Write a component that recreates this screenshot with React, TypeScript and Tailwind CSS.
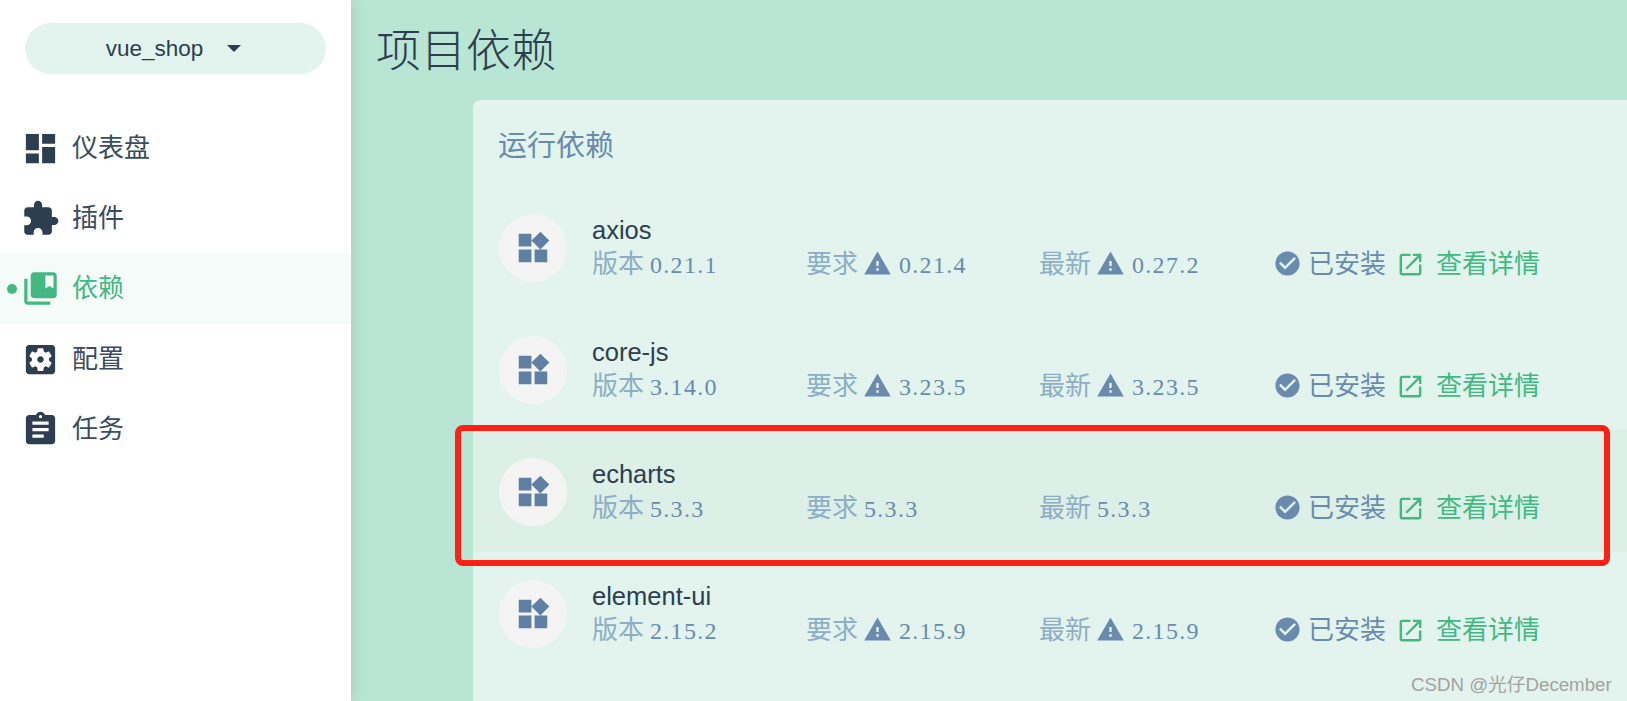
const CJK = 'font-["Liberation_Sans","Noto_Sans_CJK_SC",sans-serif]';

const ICONS = {
  dashboard: 'M3 13h8V3H3v10zm0 8h8v-6H3v6zm10 0h8V11h-8v10zm0-18v6h8V3h-8z',
  extension:
    'M20.5 11H19V7c0-1.1-.9-2-2-2h-4V3.5C13 2.12 11.88 1 10.5 1S8 2.12 8 3.5V5H4c-1.1 0-1.99.9-1.99 2v3.8H3.5c1.49 0 2.7 1.21 2.7 2.7s-1.21 2.7-2.7 2.7H2V20c0 1.1.9 2 2 2h3.8v-1.5c0-1.49 1.21-2.7 2.7-2.7 1.49 0 2.7 1.21 2.7 2.7V22H17c1.1 0 2-.9 2-2v-4h1.5c1.38 0 2.5-1.12 2.5-2.5S21.88 11 20.5 11z',
  bookmark:
    'M4 6H2v14c0 1.1.9 2 2 2h14v-2H4V6zM20 2H8c-1.1 0-2 .9-2 2v12c0 1.1.9 2 2 2h12c1.1 0 2-.9 2-2V4c0-1.1-.9-2-2-2zm0 10l-2.5-1.5L15 12V4h5v8z',
  settings:
    'M12 10c-1.1 0-2 .9-2 2s.9 2 2 2 2-.9 2-2-.9-2-2-2zm7-7H5c-1.11 0-2 .9-2 2v14c0 1.1.89 2 2 2h14c1.11 0 2-.9 2-2V5c0-1.1-.89-2-2-2zm-1.75 9c0 .23-.02.46-.05.68l1.48 1.16c.13.11.17.3.08.45l-1.4 2.42c-.09.15-.27.21-.43.15l-1.74-.7c-.36.28-.76.51-1.18.69l-.26 1.85c-.03.17-.18.3-.35.3h-2.8c-.17 0-.32-.13-.35-.29l-.26-1.85c-.43-.18-.82-.41-1.18-.69l-1.74.7c-.16.06-.34 0-.43-.15l-1.4-2.42c-.09-.15-.05-.34.08-.45l1.48-1.16c-.03-.23-.05-.46-.05-.69 0-.23.02-.46.05-.68l-1.48-1.16c-.13-.11-.17-.3-.08-.45l1.4-2.42c.09-.15.27-.21.43-.15l1.74.7c.36-.28.76-.51 1.18-.69l.26-1.85c.03-.17.18-.3.35-.3h2.8c.17 0 .32.13.35.29l.26 1.85c.43.18.82.41 1.18.69l1.74-.7c.16-.06.34 0 .43.15l1.4 2.42c.09.15.05.34-.08.45l-1.48 1.16c.03.23.05.46.05.69z',
  assignment:
    'M19 3h-4.18C14.4 1.84 13.3 1 12 1c-1.3 0-2.4.84-2.82 2H5c-1.1 0-2 .9-2 2v14c0 1.1.9 2 2 2h14c1.1 0 2-.9 2-2V5c0-1.1-.9-2-2-2zm-7 0c.55 0 1 .45 1 1s-.45 1-1 1-1-.45-1-1 .45-1 1-1zm2 14H7v-2h7v2zm3-4H7v-2h10v2zm0-4H7V7h10v2z',
  widgets: 'M13 13v8h8v-8h-8zM3 21h8v-8H3v8zM3 3v8h8V3H3zm13.66-1.31L11 7.34 16.66 13l5.66-5.66-5.66-5.65z',
  warning: 'M1 21h22L12 2 1 21zm12-3h-2v-2h2v2zm0-4h-2v-4h2v4z',
  check: 'M12 2C6.48 2 2 6.48 2 12s4.48 10 10 10 10-4.48 10-10S17.52 2 12 2zm-2 15l-5-5 1.41-1.41L10 14.17l7.59-7.59L19 8l-9 9z',
  open: 'M19 19H5V5h7V3H5c-1.11 0-2 .9-2 2v14c0 1.1.89 2 2 2h14c1.1 0 2-.9 2-2v-7h-2v7zM14 3v2h3.59l-9.83 9.83 1.41 1.41L19 6.41V10h2V3h-7z',
};

function Icon({ name, className }: { name: keyof typeof ICONS; className: string }) {
  return (
    <svg viewBox="0 0 24 24" fill="currentColor" className={className}>
      <path d={ICONS[name]} />
    </svg>
  );
}

const NAV: { icon: keyof typeof ICONS; label: string; active?: boolean }[] = [
  { icon: 'dashboard', label: '仪表盘' },
  { icon: 'extension', label: '插件' },
  { icon: 'bookmark', label: '依赖', active: true },
  { icon: 'settings', label: '配置' },
  { icon: 'assignment', label: '任务' },
];

const DEPS = [
  { name: 'axios', current: '0.21.1', wanted: '0.21.4', latest: '0.27.2', warn: true },
  { name: 'core-js', current: '3.14.0', wanted: '3.23.5', latest: '3.23.5', warn: true },
  { name: 'echarts', current: '5.3.3', wanted: '5.3.3', latest: '5.3.3', warn: false, hover: true },
  { name: 'element-ui', current: '2.15.2', wanted: '2.15.9', latest: '2.15.9', warn: true },
];

function Version({ value, warn }: { value: string; warn?: boolean }) {
  return (
    <span
      className={`font-["Liberation_Serif",serif] text-[24px] tracking-[1.3px] text-[#6a8bad] ${
        warn ? 'ml-[7px]' : 'ml-[6px]'
      }`}
    >
      {value}
    </span>
  );
}

function Sidebar() {
  return (
    <aside className="relative z-10 w-[351px] shrink-0 bg-white shadow-[0_0_16px_rgba(0,0,0,0.12)]">
      <div className="mx-[25px] mt-[23px] h-[51px] rounded-full bg-[#e2f4ed] flex items-center justify-center text-[22.5px] text-[#2c3e50] pr-[4px]">
        <span>vue_shop</span>
        <span className="ml-[24px] w-0 h-0 border-x-[7px] border-x-transparent border-t-[7px] border-t-[#2c3e50]" />
      </div>
      <nav className="mt-[39px]">
        {NAV.map((item) => (
          <div
            key={item.label}
            className={`relative h-[70.4px] flex items-center pl-[21px] ${
              item.active ? 'bg-[#f5fbf9] text-[#42b983]' : 'text-[#2c3e50]'
            }`}
          >
            {item.active && <span className="absolute left-[7px] w-[10px] h-[10px] rounded-full bg-[#42b983]" />}
            <Icon name={item.icon} className="w-[39px] h-[39px]" />
            <span className={`ml-[12px] text-[26px] ${item.active ? 'text-[#42b983]' : 'text-[#3a4c5e]'}`}>
              {item.label}
            </span>
          </div>
        ))}
      </nav>
    </aside>
  );
}

function DepRow({ dep }: { dep: (typeof DEPS)[number] }) {
  return (
    <div className={`h-[122px] flex items-center pl-[26px] ${dep.hover ? 'bg-[#dcf0e8]' : ''}`}>
      <div className="mt-[2px] w-[68px] h-[68px] rounded-full bg-[#f4f4f4] flex items-center justify-center shrink-0">
        <Icon name="widgets" className="w-[38px] h-[38px] text-[#5f7fa3]" />
      </div>
      <div className="ml-[25px] pt-[2px]">
        <div className="text-[25.5px] leading-[33px] text-[#2c3e50]">{dep.name}</div>
        <div className="flex items-center h-[36px] text-[26px] text-[#8fadc4]">
          <div className="w-[214px] flex items-center">
            版本
            <Version value={dep.current} />
          </div>
          <div className="w-[233px] flex items-center">
            要求
            {dep.warn && <Icon name="warning" className="ml-[5px] mb-[3px] w-[29px] h-[29px] text-[#6a8bad]" />}
            <Version value={dep.wanted} warn={dep.warn} />
          </div>
          <div className="w-[234px] flex items-center">
            最新
            {dep.warn && <Icon name="warning" className="ml-[5px] mb-[3px] w-[29px] h-[29px] text-[#6a8bad]" />}
            <Version value={dep.latest} warn={dep.warn} />
          </div>
          <div className="flex items-center text-[#6a8bad]">
            <Icon name="check" className="mb-[3px] w-[29px] h-[29px]" />
            <span className="ml-[6px]">已安装</span>
            <Icon name="open" className="ml-[10px] mb-[1px] w-[29px] h-[29px] text-[#42b983]" />
            <span className="ml-[11px] text-[#42b983]">查看详情</span>
          </div>
        </div>
      </div>
    </div>
  );
}

export default function App() {
  return (
    <div className={`relative flex h-[701px] w-full overflow-hidden bg-[#b9e5d5] ${CJK}`}>
      <Sidebar />
      <main className="flex-1 flex flex-col min-w-0">
        <h1 className="h-[100px] shrink-0 pl-[25px] pt-[4px] flex items-center text-[45px] font-light text-[#2c3e50]">
          项目依赖
        </h1>
        <section className="flex-1 ml-[122px] rounded-tl-[8px] bg-[#e2f4ed]">
          <h2 className="h-[86px] pl-[25px] pt-[8px] flex items-center text-[29px] font-normal text-[#6a8bad]">
            运行依赖
          </h2>
          {DEPS.map((dep) => (
            <DepRow key={dep.name} dep={dep} />
          ))}
        </section>
      </main>
      <div className="absolute z-20 left-[455px] top-[425px] w-[1155px] h-[141px] rounded-[8px] border-[6px] border-[#ff2015]" />
      <div className="absolute z-20 left-[1411px] top-[671px] text-[18.7px] text-[#a3a3a3]">CSDN @光仔December</div>
    </div>
  );
}
